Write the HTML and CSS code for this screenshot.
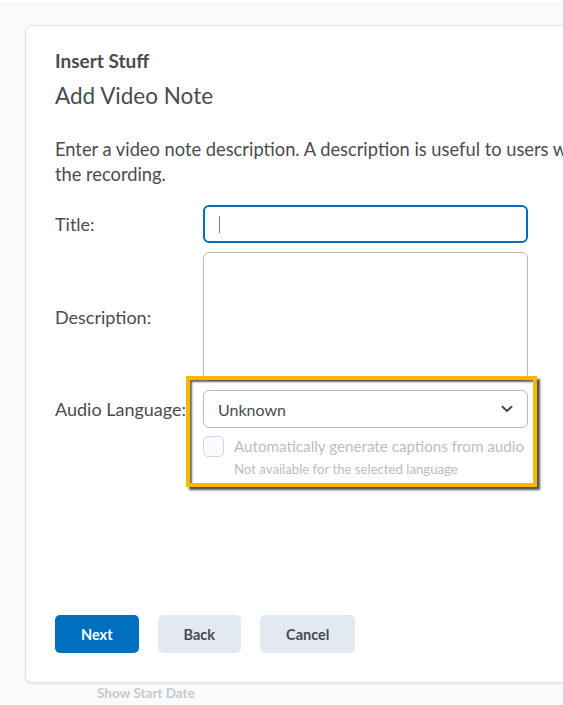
FILE: index.html
```html
<!DOCTYPE html>
<html>
<head>
<meta charset="utf-8">
<link rel="stylesheet" href="styles.css">
</head>
<body>
<div class="topline"></div>
<div class="page">
  <div class="card">
    <div class="kicker">Insert Stuff</div>
    <h1 class="title">Add Video Note</h1>
    <p class="intro">Enter a video note description. A description is useful to users who view the recording.</p>
    <div class="form">
      <div class="label">Title:</div>
      <div class="field input focused"><span class="caret"></span></div>
      <div class="label">Description:</div>
      <div class="field textarea"></div>
      <div class="label lang-label">Audio Language:</div>
      <div class="lang">
        <div class="field select">
          <span>Unknown</span>
          <svg class="chev" width="12" height="8" viewBox="0 0 12 8"><polyline points="1.5,1.8 6,6 10.5,1.8" fill="none" stroke="#494c4e" stroke-width="2" stroke-linecap="round" stroke-linejoin="round"/></svg>
        </div>
        <div class="check-row">
          <span class="checkbox"></span>
          <div class="check-text">
            <div class="check-label">Automatically generate captions from audio</div>
            <div class="check-help">Not available for the selected language</div>
          </div>
        </div>
      </div>
    </div>
    <div class="buttons">
      <button class="btn primary">Next</button>
      <button class="btn">Back</button>
      <button class="btn">Cancel</button>
    </div>
    <div class="highlight"></div>
  </div>
  <div class="below">Show Start Date</div>
</div>
</body>
</html>
```
FILE: styles.css
```css
html, body {
  margin: 0;
  padding: 0;
  overflow: hidden;
  background: #f9fafc;
  font-family: Lato, "Open Sans", sans-serif;
  color: #494c4e;
}
.topline {
  height: 3px;
  background: #fdfdfe;
  border-bottom: 1px solid #f1f2f5;
}
.page {
  padding: 21px 0 0 25px;
}
.card {
  position: relative;
  box-sizing: border-box;
  width: 648px;
  height: 658px;
  background: #fff;
  border: 1px solid #e0e2e7;
  border-radius: 7px;
  box-shadow: 0 1px 3px rgba(0,0,0,0.08);
  padding: 24px 30px 0 29px;
}
.kicker {
  font-size: 19px;
  font-weight: 700;
  line-height: 22px;
}
.title {
  margin: 10px 0 0;
  font-size: 22.5px;
  font-weight: 400;
  line-height: 28px;
}
.intro {
  margin: 27px 0 0;
  font-size: 18.3px;
  line-height: 25px;
}
.form {
  display: grid;
  grid-template-columns: 148px 325px;
  row-gap: 9px;
  margin-top: 18px;
  align-items: center;
}
.label {
  font-size: 18px;
  line-height: 22px;
}
.lang-label {
  align-self: start;
  margin-top: 8px;
}
.field {
  box-sizing: border-box;
  border: 1px solid #b5babe;
  border-radius: 6px;
  background: #fff;
}
.input {
  height: 38px;
  display: flex;
  align-items: center;
  padding-left: 14px;
}
.focused {
  border: 2px solid #006fbf;
}
.caret {
  width: 1px;
  height: 17px;
  background: #7a7d80;
}
.textarea {
  height: 129px;
}
.select {
  height: 38px;
  display: flex;
  align-items: center;
  justify-content: space-between;
  padding: 0 14px 0 14px;
  font-size: 16px;
}
.chev {
  display: block;
}
.check-row {
  display: flex;
  gap: 10px;
  margin-top: 8px;
  align-items: flex-start;
}
.checkbox {
  box-sizing: border-box;
  width: 21px;
  height: 21px;
  border: 1px solid #d2d7dc;
  border-radius: 5px;
  background: #f9fbfe;
  flex: none;
}
.check-label {
  font-size: 15.2px;
  line-height: 20px;
  color: #b9bec2;
}
.check-help {
  font-size: 13.2px;
  line-height: 16px;
  margin-top: 5px;
  color: #b9bec2;
}
.buttons {
  display: flex;
  gap: 19px;
  margin-top: 138px;
}
.btn {
  height: 38px;
  padding: 0 26px;
  border: none;
  border-radius: 5px;
  background: #e3e9f1;
  color: #494c4e;
  font-family: Lato, "Open Sans", sans-serif;
  font-size: 14.5px;
  font-weight: 700;
}
.btn.primary {
  background: #006fbf;
  color: #fff;
  padding: 0 26px;
}
.highlight {
  position: absolute;
  left: 160px;
  top: 350px;
  width: 351px;
  height: 111px;
  box-sizing: border-box;
  border: 4px solid #f7b801;
  box-shadow: 3px 3px 2px rgba(40,40,40,0.8), inset 2px 2px 2px rgba(40,40,40,0.7);
}
.below {
  margin: 2px 0 0 72px;
  font-size: 13.5px;
  font-weight: 700;
  color: #c6cacd;
}
```
